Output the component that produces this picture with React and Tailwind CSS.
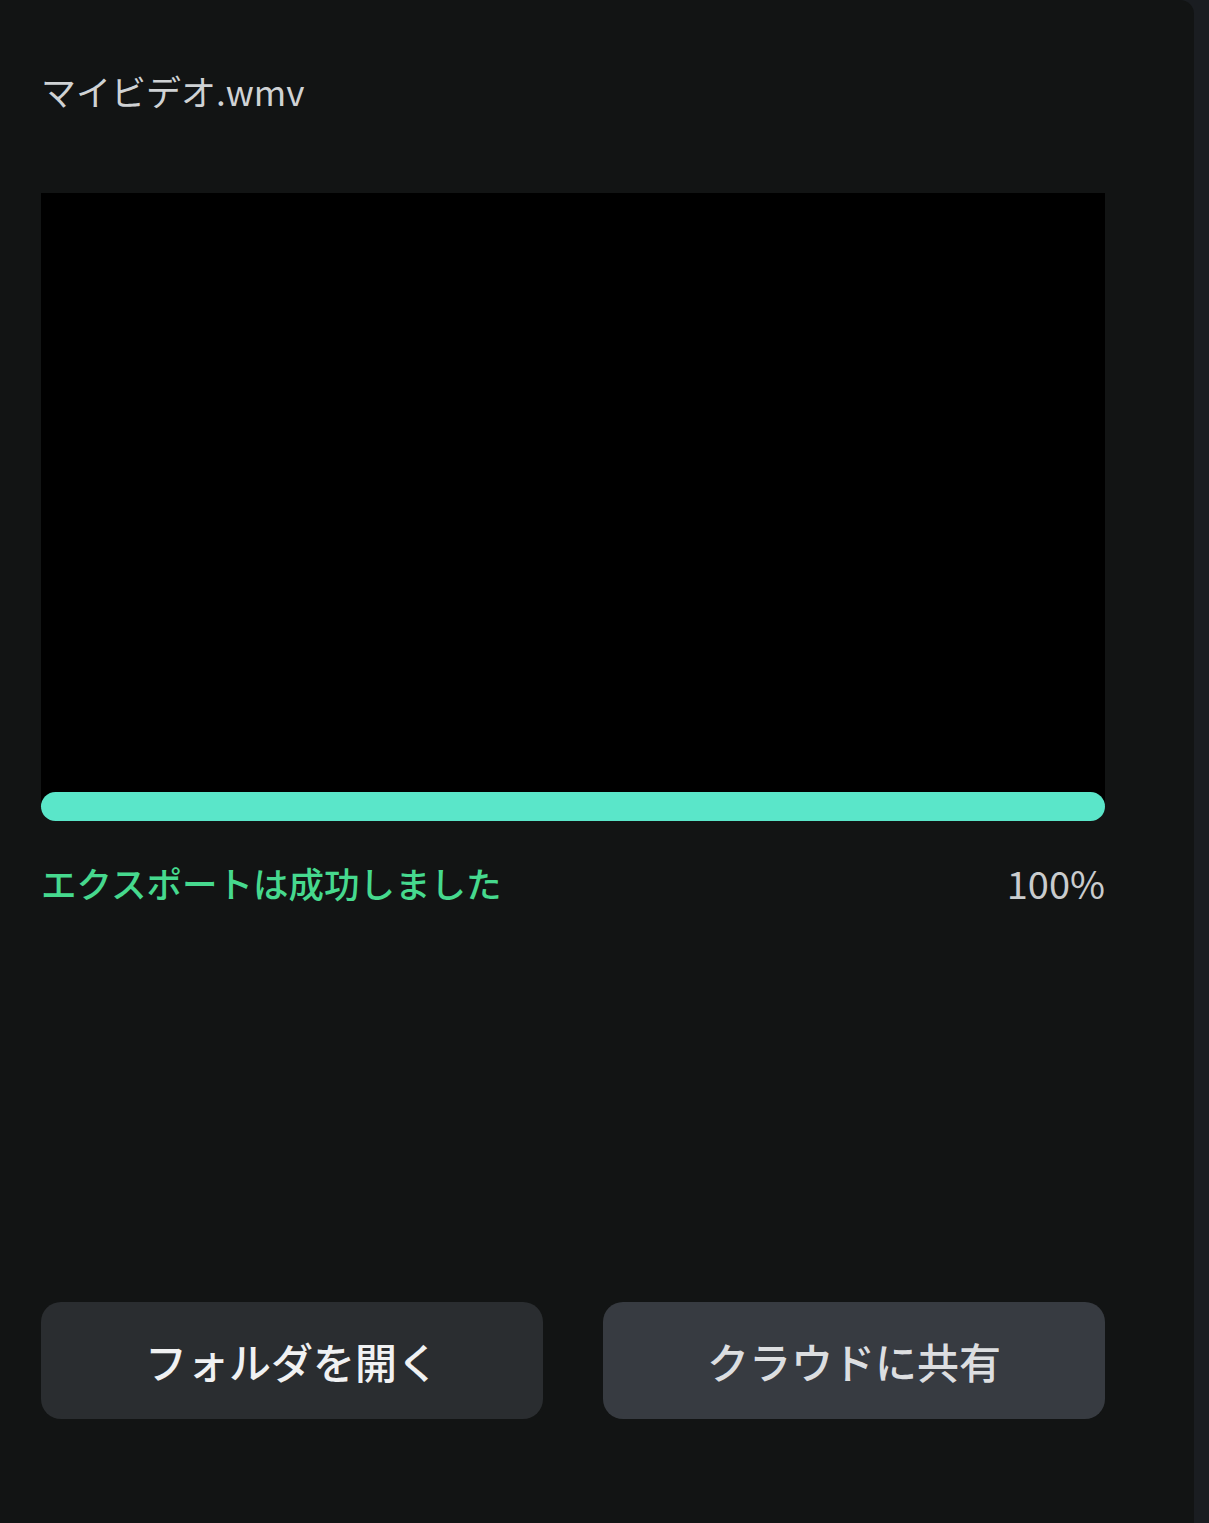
export default function App() {
  const font = {
    fontFamily: '"Noto Sans CJK JP", "Noto Sans", sans-serif',
  };

  return (
    <div className="flex min-h-[1523px] w-full bg-[#1a1d21]" style={font}>
      {/* export dialog panel */}
      <div className="flex w-[1194px] flex-col rounded-tr-[14px] bg-[#121414] pl-[41px] pr-[89px]">
        <div className="h-[193px] pt-[70px] text-[35px] leading-[42px] text-[#cfd2d4]">
          マイビデオ.wmv
        </div>

        {/* preview */}
        <div className="h-[599px] bg-black" />
        <div className="h-[29px] bg-gradient-to-b from-black from-50% to-transparent to-50%">
          <div className="h-full w-full rounded-full bg-[#5ae6c9]" />
        </div>

        <div className="mt-[41px] flex items-center justify-between leading-[42px]">
          <span className="text-[35.5px] font-medium text-[#46d98e]">
            エクスポートは成功しました
          </span>
          <span className="text-[38px] text-[#c9ccce]">100%</span>
        </div>

        <div className="mt-[398px] flex gap-[60px]">
          <button className="flex h-[117px] flex-1 items-center justify-center rounded-[20px] bg-[#2a2d30] text-[42px] font-medium text-[#f0f1f2]">
            フォルダを開く
          </button>
          <button className="flex h-[117px] flex-1 items-center justify-center rounded-[20px] bg-[#373b41] text-[42px] font-medium text-[#dcdee0]">
            クラウドに共有
          </button>
        </div>
      </div>
    </div>
  );
}
